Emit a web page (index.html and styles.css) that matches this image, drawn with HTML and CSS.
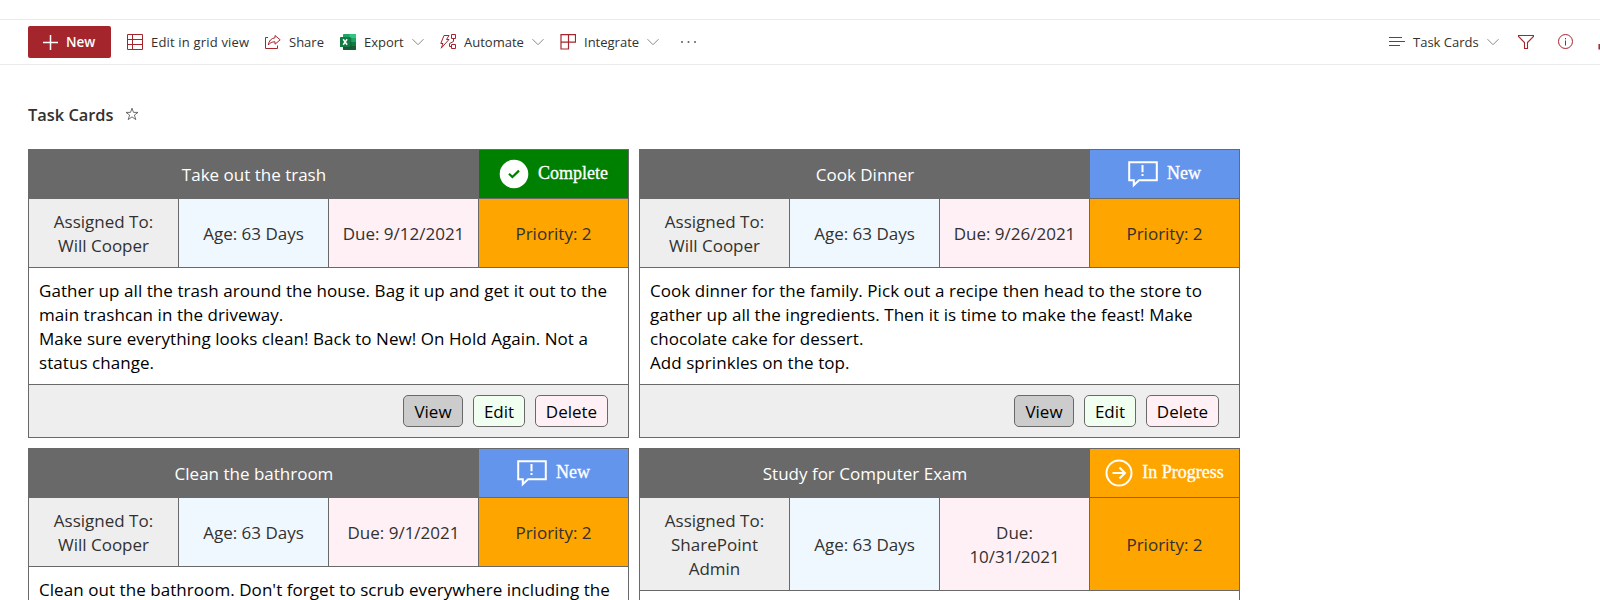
FILE: index.html
```
<!DOCTYPE html>
<html lang="en">
<head>
    <meta charset="UTF-8">
    <meta name="viewport" content="width=device-width, initial-scale=1.0">
    <title>Task Cards</title>
    <link rel="stylesheet" href="styles.css">
</head>
<body>
    <svg class="sprite" aria-hidden="true">
        <symbol id="chevron" viewBox="0 0 12 12">
            <path d="M0.5 3.2 L6 8.7 L11.5 3.2" fill="none" stroke="#8a8886" stroke-width="1"/>
        </symbol>
        <symbol id="message" viewBox="0 0 30 28">
            <path d="M1.2 2.2 H28.8 V20.2 H11 L5.8 25.2 V20.2 H1.2 Z" fill="none" stroke="#fff" stroke-width="2"/>
            <path d="M14.5 5 V12.2 M14.5 14 V16" stroke="#fff" stroke-width="2"/>
        </symbol>
    </svg>

    <div class="command-bar">
        <button class="new-btn">
            <svg width="15" height="15" viewBox="0 0 15 15"><path d="M7.5 0 V15 M0 7.5 H15" stroke="#fff" stroke-width="1.5"/></svg>
            New
        </button>
        <div class="command edit-grid">
            <svg class="icon" viewBox="0 0 16 16" fill="none" stroke="#a4262c">
                <path d="M0.5 0.5 H15.5 V15.5 H0.5 Z M5.5 0.5 V15.5 M0.5 5.5 H15.5 M0.5 10.5 H15.5"/>
            </svg>
            <span>Edit in grid view</span>
        </div>
        <div class="command share">
            <svg class="icon" viewBox="0 0 16 16" fill="none" stroke="#a4262c">
                <path d="M3 3.5 H0.5 V14.5 H12.5 V11.5"/>
                <path d="M10 1.5 L15.2 5.8 L10 10.2 V7.8 C7 7.8 5 8.8 3.3 11 C3.8 6.8 6.2 4.3 10 3.8 Z"/>
            </svg>
            <span>Share</span>
        </div>
        <div class="command export">
            <svg class="icon" viewBox="0 0 16 16">
                <rect x="3" width="13" height="16" rx="0.8" fill="#21a366"/>
                <path d="M9.5 0 H15.2 A0.8 0.8 0 0 1 16 0.8 V4 H9.5 Z" fill="#33c481"/>
                <rect x="3" y="8" width="6.5" height="4" fill="#185c37"/>
                <rect x="9.5" y="8" width="6.5" height="4" fill="#107c41"/>
                <path d="M3 12 H16 V15.2 A0.8 0.8 0 0 1 15.2 16 H3.8 A0.8 0.8 0 0 1 3 15.2 Z" fill="#185c37"/>
                <rect x="3" y="3.5" width="8.3" height="10" fill="#0b4a28" opacity="0.5"/>
                <rect y="3" width="10.3" height="10" rx="0.6" fill="#107c41"/>
                <path d="M3.2 5.3 L7.1 10.7 M7.1 5.3 L3.2 10.7" stroke="#fff" stroke-width="1.5"/>
            </svg>
            <span>Export</span>
            <svg class="chevron"><use href="#chevron"/></svg>
        </div>
        <div class="command automate">
            <svg class="icon" viewBox="0 0 16 16" fill="none" stroke="#a4262c">
                <path d="M4 1.5 H9 L6.5 5.5 H9 L1.2 14.2 L3 9.5 H0.8 Z"/>
                <path d="M11.5 0.5 H15.5 V4.5 H11.5 Z M11.5 10.5 H15.5 V14.5 H11.5 Z M13.5 4.5 V7.5 L9.5 9.5 V12.5 H11.5"/>
            </svg>
            <span>Automate</span>
            <svg class="chevron"><use href="#chevron"/></svg>
        </div>
        <div class="command integrate">
            <svg class="icon" viewBox="0 0 16 16" fill="none" stroke="#a4262c">
                <path d="M1 0.7 H15.5 V8.2 H8.5 V15 H1 Z M1 8.2 H8.5 V0.7" stroke-width="1.2"/>
            </svg>
            <span>Integrate</span>
            <svg class="chevron"><use href="#chevron"/></svg>
        </div>
        <svg width="16" height="4" viewBox="0 0 16 4" fill="#605e5c">
            <circle cx="1" cy="2" r="1"/><circle cx="7.5" cy="2" r="1"/><circle cx="14" cy="2" r="1"/>
        </svg>

        <div class="far-commands">
            <div class="command view-picker">
                <svg class="icon" viewBox="0 0 16 16" stroke="#a4262c">
                    <path d="M0 3.5 H13 M0 7.5 H16 M0 11.5 H11"/>
                </svg>
                <span>Task Cards</span>
                <svg class="chevron"><use href="#chevron"/></svg>
            </div>
            <svg class="icon filter" viewBox="0 0 16 16" fill="none" stroke="#a4262c" stroke-width="1.1">
                <path d="M0.5 1.5 H15.5 V2.5 L9.5 8.5 V14.5 H6.5 V8.5 L0.5 2.5 Z"/>
            </svg>
            <svg class="icon info" viewBox="0 0 16 16" fill="none" stroke="#a4262c">
                <circle cx="7.5" cy="7.5" r="7"/>
                <path d="M7.5 6.5 V11.5 M7.5 4 V5.3"/>
            </svg>
            <svg class="icon expand" viewBox="0 0 16 16" fill="none" stroke="#a4262c" stroke-width="1.5">
                <path d="M1.2 10 V14.7 H6 M1.2 14.7 L15 1"/>
            </svg>
        </div>
    </div>

    <div class="list-title">
        <h1>Task Cards</h1>
        <svg width="14" height="14" viewBox="0 0 14 14" fill="none" stroke="#605e5c">
            <path d="M7 1.2 L8.5 5.4 H13 L9.4 8.1 L10.8 12.6 L7 9.9 L3.2 12.6 L4.6 8.1 L1 5.4 H5.5 Z" stroke-width="0.9"/>
        </svg>
    </div>

    <div class="cards">
        <div class="card">
            <div class="card-header">
                <div class="title">Take out the trash</div>
                <div class="status complete">
                    <svg width="30" height="30" viewBox="0 0 30 30">
                        <circle cx="15" cy="15" r="14.3" fill="#fff"/>
                        <path d="M10 14.8 L13.4 18 L20 11.6" fill="none" stroke="#008000" stroke-width="2.2"/>
                    </svg>
                    <span>Complete</span>
                </div>
            </div>
            <div class="details">
                <div class="assigned">Assigned To:<br>Will Cooper</div>
                <div class="age">Age: 63 Days</div>
                <div class="due">Due: 9/12/2021</div>
                <div class="priority">Priority: 2</div>
            </div>
            <div class="description">Gather up all the trash around the house. Bag it up and get it out to the<br>main trashcan in the driveway.<br>Make sure everything looks clean! Back to New! On Hold Again. Not a<br>status change.</div>
            <div class="actions">
                <button class="view">View</button>
                <button class="edit">Edit</button>
                <button class="delete">Delete</button>
            </div>
        </div>

        <div class="card">
            <div class="card-header">
                <div class="title">Cook Dinner</div>
                <div class="status new">
                    <svg width="30" height="28"><use href="#message"/></svg>
                    <span>New</span>
                </div>
            </div>
            <div class="details">
                <div class="assigned">Assigned To:<br>Will Cooper</div>
                <div class="age">Age: 63 Days</div>
                <div class="due">Due: 9/26/2021</div>
                <div class="priority">Priority: 2</div>
            </div>
            <div class="description">Cook dinner for the family. Pick out a recipe then head to the store to<br>gather up all the ingredients. Then it is time to make the feast! Make<br>chocolate cake for dessert.<br>Add sprinkles on the top.</div>
            <div class="actions">
                <button class="view">View</button>
                <button class="edit">Edit</button>
                <button class="delete">Delete</button>
            </div>
        </div>

        <div class="card">
            <div class="card-header">
                <div class="title">Clean the bathroom</div>
                <div class="status new">
                    <svg width="30" height="28"><use href="#message"/></svg>
                    <span>New</span>
                </div>
            </div>
            <div class="details">
                <div class="assigned">Assigned To:<br>Will Cooper</div>
                <div class="age">Age: 63 Days</div>
                <div class="due">Due: 9/1/2021</div>
                <div class="priority">Priority: 2</div>
            </div>
            <div class="description">Clean out the bathroom. Don't forget to scrub everywhere including the</div>
        </div>

        <div class="card">
            <div class="card-header">
                <div class="title">Study for Computer Exam</div>
                <div class="status in-progress">
                    <svg width="28" height="28" viewBox="0 0 28 28" fill="none" stroke="#fff" stroke-width="2">
                        <circle cx="14" cy="14" r="12.5"/>
                        <path d="M7.5 14 H20 M14.5 8.5 L20 14 L14.5 19.5"/>
                    </svg>
                    <span>In Progress</span>
                </div>
            </div>
            <div class="details">
                <div class="assigned">Assigned To:<br>SharePoint<br>Admin</div>
                <div class="age">Age: 63 Days</div>
                <div class="due">Due:<br>10/31/2021</div>
                <div class="priority">Priority: 2</div>
            </div>
            <div class="description"></div>
        </div>
    </div>
</body>
</html>
```
FILE: styles.css
```
* {
    margin: 0;
    padding: 0;
    box-sizing: border-box;
}

body {
    height: 600px;
    padding-top: 19px;
    overflow: hidden;
    font-family: 'Segoe UI', 'Open Sans', sans-serif;
    color: #323130;
    background-color: #fff;
}

button {
    font-family: inherit;
}

.sprite {
    display: none;
}

/* Command bar */
.command-bar {
    display: flex;
    align-items: center;
    height: 46px;
    padding-left: 28px;
    border-top: 1px solid #eaeaea;
    border-bottom: 1px solid #eaeaea;
    font-size: 13px;
    white-space: nowrap;
}

.new-btn {
    display: flex;
    align-items: center;
    gap: 8px;
    width: 83px;
    height: 32px;
    margin-right: 16px;
    padding-left: 15px;
    border: none;
    border-radius: 2px;
    background-color: #a4262c;
    color: #fff;
    font-size: 13.5px;
    font-weight: 600;
}

.command {
    display: flex;
    flex: none;
    align-items: center;
    gap: 8px;
}

.icon {
    flex: none;
    width: 16px;
    height: 16px;
}

.chevron {
    flex: none;
    width: 12px;
    height: 12px;
}

.edit-grid {
    width: 138px;
    letter-spacing: 0.18px;
}

.share {
    width: 75px;
}

.export {
    width: 100px;
}

.automate {
    width: 120px;
}

.integrate {
    width: 121px;
}

.far-commands {
    display: flex;
    align-items: center;
    width: 211px;
    margin-left: auto;
    overflow: hidden;
}

.view-picker {
    width: 129px;
}

.filter,
.info {
    margin-right: 24px;
}

/* List title */
.list-title {
    display: flex;
    align-items: center;
    gap: 11px;
    height: 24px;
    margin: 37px 0 23px 28px;
}

.list-title h1 {
    font-size: 16.4px;
    font-weight: 600;
}

/* Cards */
.cards {
    display: grid;
    grid-template-columns: 601px 601px;
    align-items: start;
    gap: 10px;
    margin-left: 28px;
}

.card {
    border: solid #696969;
    border-width: 1px 0 0 1px;
    font-size: 17px;
    line-height: 24px;
}

.card-header,
.details {
    display: grid;
    text-align: center;
}

.card-header {
    grid-template-columns: 450px 150px;
    height: 49px;
}

.title {
    padding-top: 13px;
    background-color: #696969;
    color: #fff;
}

.status {
    display: flex;
    align-items: center;
    justify-content: center;
    gap: 9px;
    border: solid #696969;
    border-width: 0 1px 1px 0;
    color: #fff;
    font-family: 'Liberation Serif', serif;
    font-size: 18px;
    -webkit-text-stroke: 0.3px #fff;
}

.status span {
    padding-bottom: 3px;
}

.complete {
    background-color: #008000;
}

.new {
    background-color: #6495ed;
}

.in-progress {
    background-color: #ffa500;
}

.details {
    grid-template-columns: repeat(4, 150px);
}

.details div {
    display: flex;
    align-items: center;
    justify-content: center;
    padding: 11px 0 9px;
    border: solid #696969;
    border-width: 0 1px 1px 0;
}

.assigned {
    background-color: #eee;
}

.age {
    background-color: #f0f8ff;
}

.due {
    background-color: #fff0f5;
}

.priority {
    background-color: #ffa500;
}

.description {
    min-height: 117px;
    padding: 11px 10px 9px;
    border: solid #696969;
    border-width: 0 1px 1px 0;
    color: #000;
    letter-spacing: 0.06px;
    white-space: nowrap;
}

.actions {
    display: flex;
    justify-content: flex-end;
    gap: 10px;
    padding: 10px 20px 10px 0;
    border: solid #696969;
    border-width: 0 1px 1px 0;
    background-color: #eee;
}

.actions button {
    height: 32px;
    padding-top: 1px;
    border: 1px solid #696969;
    border-radius: 5px;
    color: #000;
    font-size: 17px;
    line-height: 24px;
}

.actions .view {
    width: 60px;
    background-color: #ccc;
}

.actions .edit {
    width: 52px;
    background-color: #f0fff0;
}

.actions .delete {
    width: 73px;
    background-color: #fff0f5;
}
```
